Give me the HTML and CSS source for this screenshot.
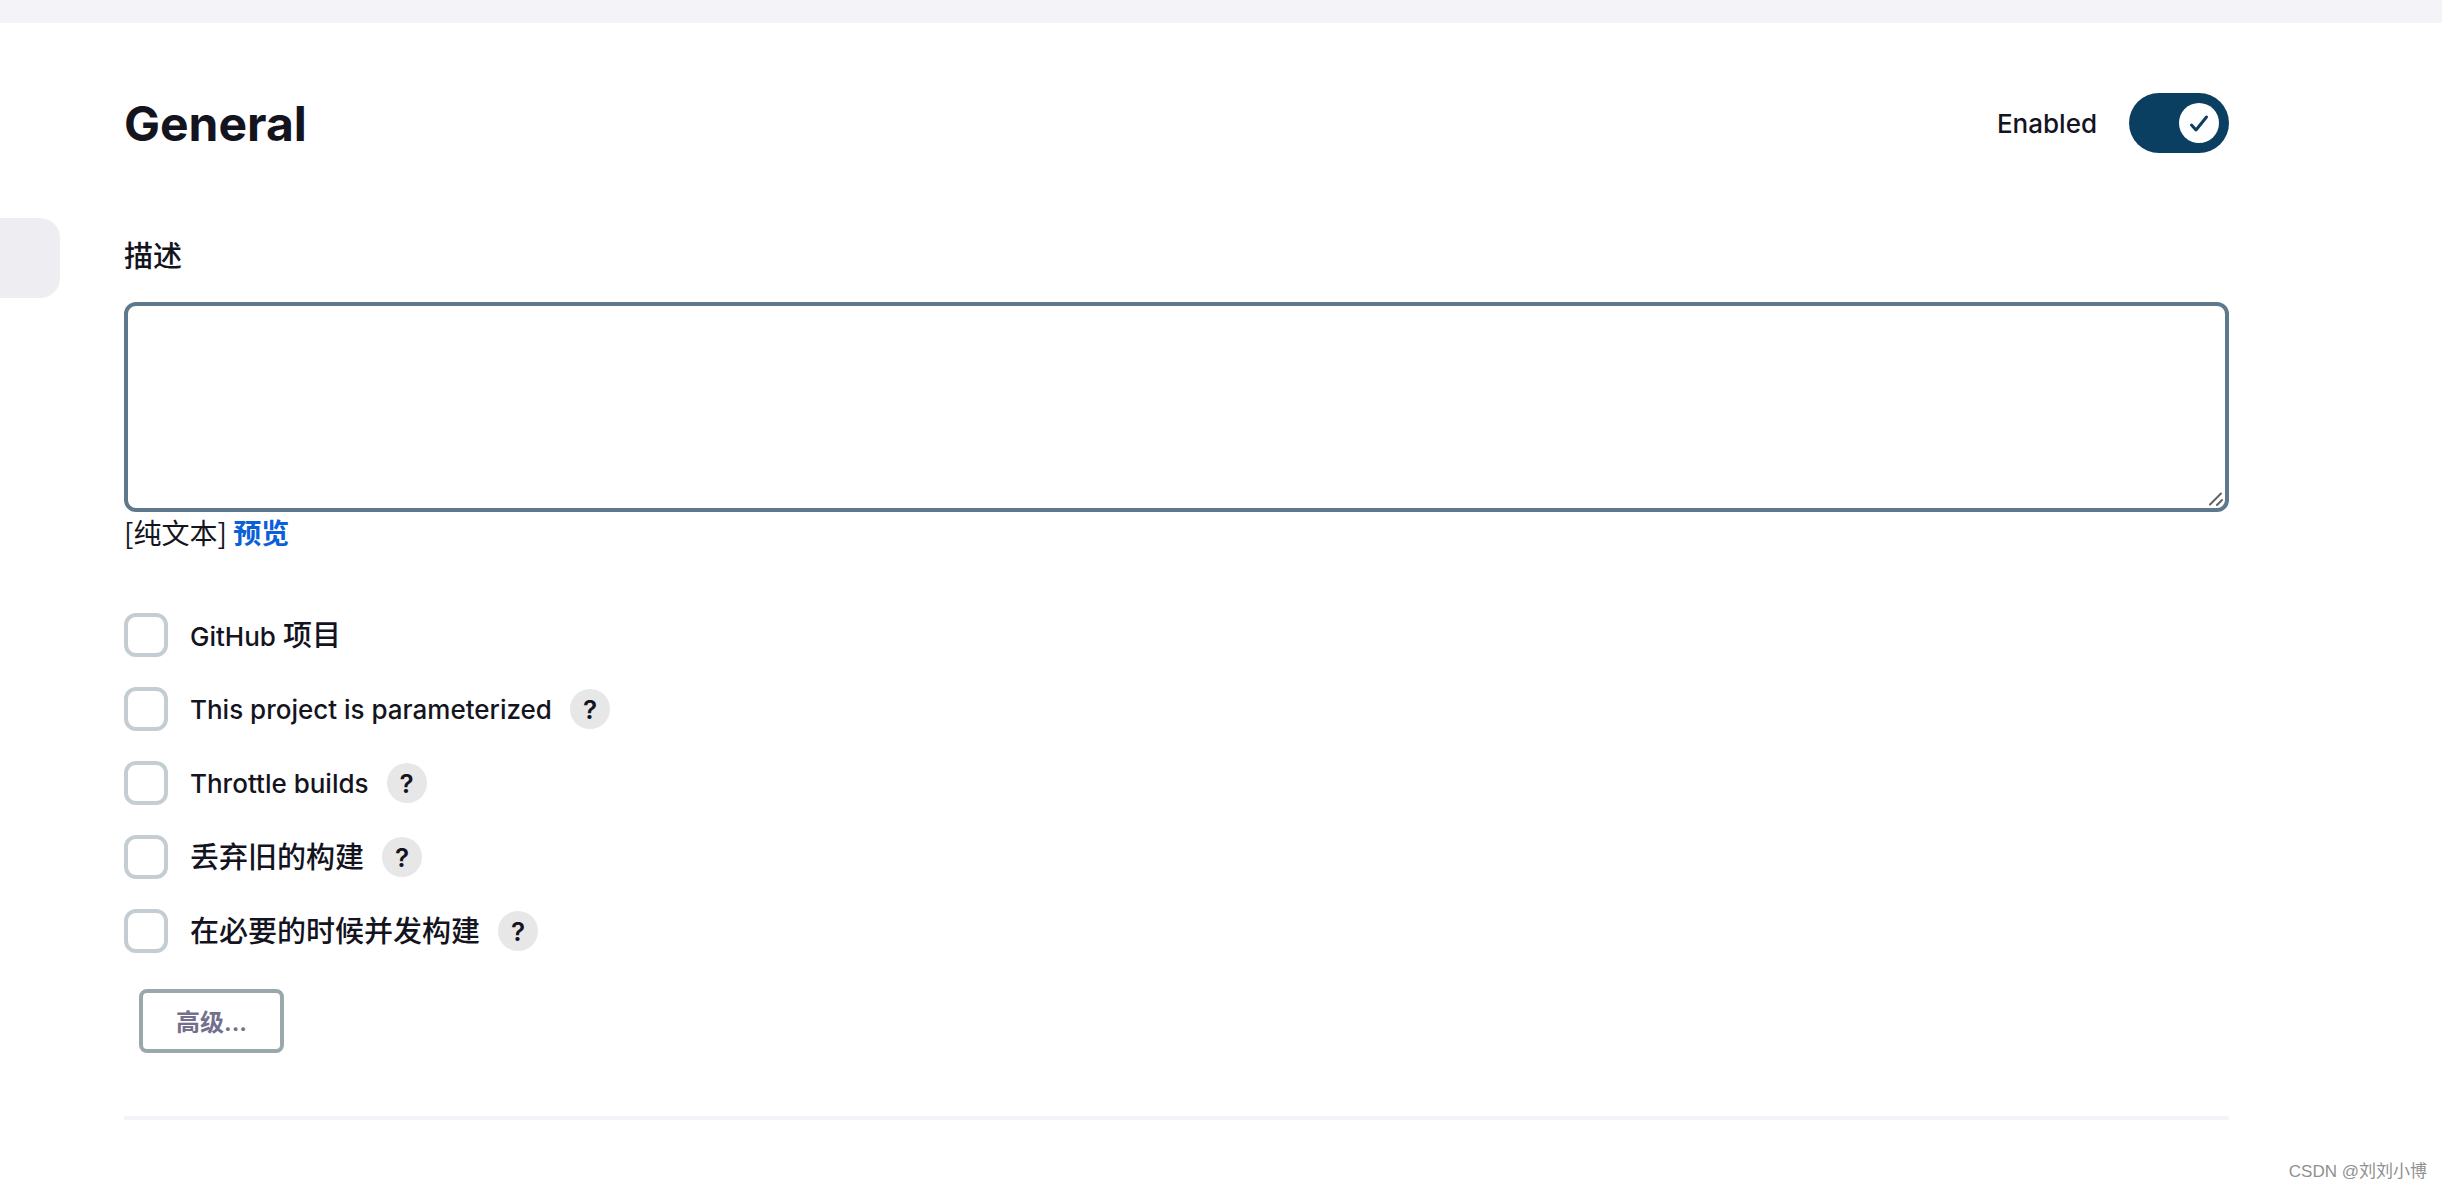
FILE: index.html
```html
<!DOCTYPE html>
<html lang="zh-CN">
<head>
    <meta charset="UTF-8">
    <meta name="viewport" content="width=device-width, initial-scale=1.0">
    <title>General</title>
    <link rel="stylesheet" href="styles.css">
</head>
<body>
    <header class="top-bar"></header>

    <div class="page">
        <aside class="sidebar">
            <div class="sidebar-item"></div>
        </aside>

        <main class="content">
            <div class="section-header">
                <h1>General</h1>
                <label class="toggle">
                    <span class="en">Enabled</span>
                    <input type="checkbox" checked>
                    <span class="toggle-track">
                        <span class="toggle-knob">
                            <svg width="40" height="40" viewBox="0 0 40 40" fill="none" stroke="#0b3f61" stroke-width="3" stroke-linecap="round" stroke-linejoin="round">
                                <path d="M12.5 22l4.500 5 10.500-13"/>
                            </svg>
                        </span>
                    </span>
                </label>
            </div>

            <form>
                <label class="field-label" for="description">描述</label>
                <div class="textarea-wrap">
                    <textarea id="description"></textarea>
                    <svg class="grip" width="14" height="14" viewBox="0 0 14 14" stroke="#636363" stroke-width="2" stroke-linecap="round">
                        <path d="M1 12.500L12 1.500M8 13l5-5"/>
                    </svg>
                </div>
                <div class="preview">[纯文本] <a href="#">预览</a></div>

                <div class="options">
                    <div class="option">
                        <input type="checkbox" id="github">
                        <label for="github"><span class="en">GitHub </span>项目</label>
                    </div>
                    <div class="option">
                        <input type="checkbox" id="params">
                        <label for="params" class="en">This project is parameterized</label>
                        <button type="button" class="help">?</button>
                    </div>
                    <div class="option">
                        <input type="checkbox" id="throttle">
                        <label for="throttle" class="en">Throttle builds</label>
                        <button type="button" class="help">?</button>
                    </div>
                    <div class="option">
                        <input type="checkbox" id="discard">
                        <label for="discard">丢弃旧的构建</label>
                        <button type="button" class="help">?</button>
                    </div>
                    <div class="option">
                        <input type="checkbox" id="concurrent">
                        <label for="concurrent">在必要的时候并发构建</label>
                        <button type="button" class="help">?</button>
                    </div>
                </div>

                <button type="button" class="advanced">高级...</button>
            </form>

            <hr>
        </main>
    </div>

    <div class="watermark">CSDN @刘刘小博</div>
</body>
</html>
```
FILE: styles.css
```css
* {
    box-sizing: border-box;
}

body {
    margin: 0;
    font-family: Inter, "Noto Sans CJK SC", sans-serif;
    font-size: 29px;
    line-height: 42px;
    color: #14141f;
    background: #fff;
}

/* latin text runs wider than the chinese labels */
.en {
    font-size: 26px;
}

.top-bar {
    height: 23px;
    background: #f3f3f8;
}

.page {
    display: flex;
    gap: 64px;
}

.sidebar {
    width: 60px;
    padding-top: 195px;
}

.sidebar-item {
    height: 80px;
    background: #eeedf2;
    border-radius: 0 20px 20px 0;
}

.content {
    flex: 1;
    padding-top: 70px;
    margin-right: 213px;
}

.section-header {
    display: flex;
    align-items: center;
    justify-content: space-between;
    margin-bottom: 83px;
}

h1 {
    margin: 0;
    padding-top: 2px;
    font-size: 48px;
    line-height: 58px;
    font-weight: 700;
}

/* enabled switch */
.toggle {
    display: flex;
    align-items: center;
    gap: 32px;
    font-weight: 500;
    cursor: pointer;
}

.toggle .en {
    padding-top: 2px;
}

.toggle input {
    position: absolute;
    opacity: 0;
}

.toggle-track {
    display: flex;
    width: 100px;
    height: 60px;
    padding: 10px;
    background: #0b3f61;
    border-radius: 30px;
}

.toggle input:checked ~ .toggle-track {
    justify-content: flex-end;
}

.toggle-knob {
    width: 40px;
    height: 40px;
    background: #fff;
    border-radius: 50%;
}

.toggle-knob svg {
    display: block;
}

/* description */
.field-label {
    display: block;
    margin-bottom: 24px;
    font-weight: 500;
}

.textarea-wrap {
    position: relative;
}

textarea {
    display: block;
    width: 100%;
    height: 210px;
    padding: 16px;
    font: inherit;
    border: 4px solid #5d798b;
    border-radius: 12px;
    outline: none;
    resize: none;
}

.grip {
    position: absolute;
    right: 6px;
    bottom: 6px;
}

.preview {
    font-family: "Noto Sans CJK SC", sans-serif;
    font-size: 28px;
    line-height: 40px;
}

.preview a {
    color: #0b5fd9;
    font-weight: 700;
    text-decoration: none;
}

/* checkboxes */
.options {
    display: flex;
    flex-direction: column;
    gap: 30px;
    margin-top: 61px;
}

.option {
    display: flex;
    align-items: center;
    height: 44px;
    font-weight: 500;
}

.option label {
    padding-top: 2px;
}

.option input {
    appearance: none;
    width: 44px;
    height: 44px;
    margin: 0 22px 0 0;
    border: 4px solid #c3cdd2;
    border-radius: 12px;
}

.help {
    width: 40px;
    height: 40px;
    margin-left: 18px;
    padding: 0;
    font-family: inherit;
    font-size: 26px;
    font-weight: 600;
    color: #14141f;
    background: #e7e7e7;
    border: none;
    border-radius: 50%;
}

.advanced {
    display: block;
    height: 64px;
    margin: 36px 0 0 15px;
    padding: 0 33px 2px;
    font-family: inherit;
    font-size: 24px;
    font-weight: 600;
    color: #736f8c;
    background: #fff;
    border: 4px solid #9aa7ad;
    border-radius: 8px;
}

hr {
    height: 4px;
    margin: 63px 0 0;
    background: #f3f3f8;
    border: none;
}

.watermark {
    position: absolute;
    right: 15px;
    bottom: 6px;
    font-family: "Liberation Sans", "Noto Sans CJK SC", sans-serif;
    font-size: 17px;
    line-height: 24px;
    color: #909090;
}
```
